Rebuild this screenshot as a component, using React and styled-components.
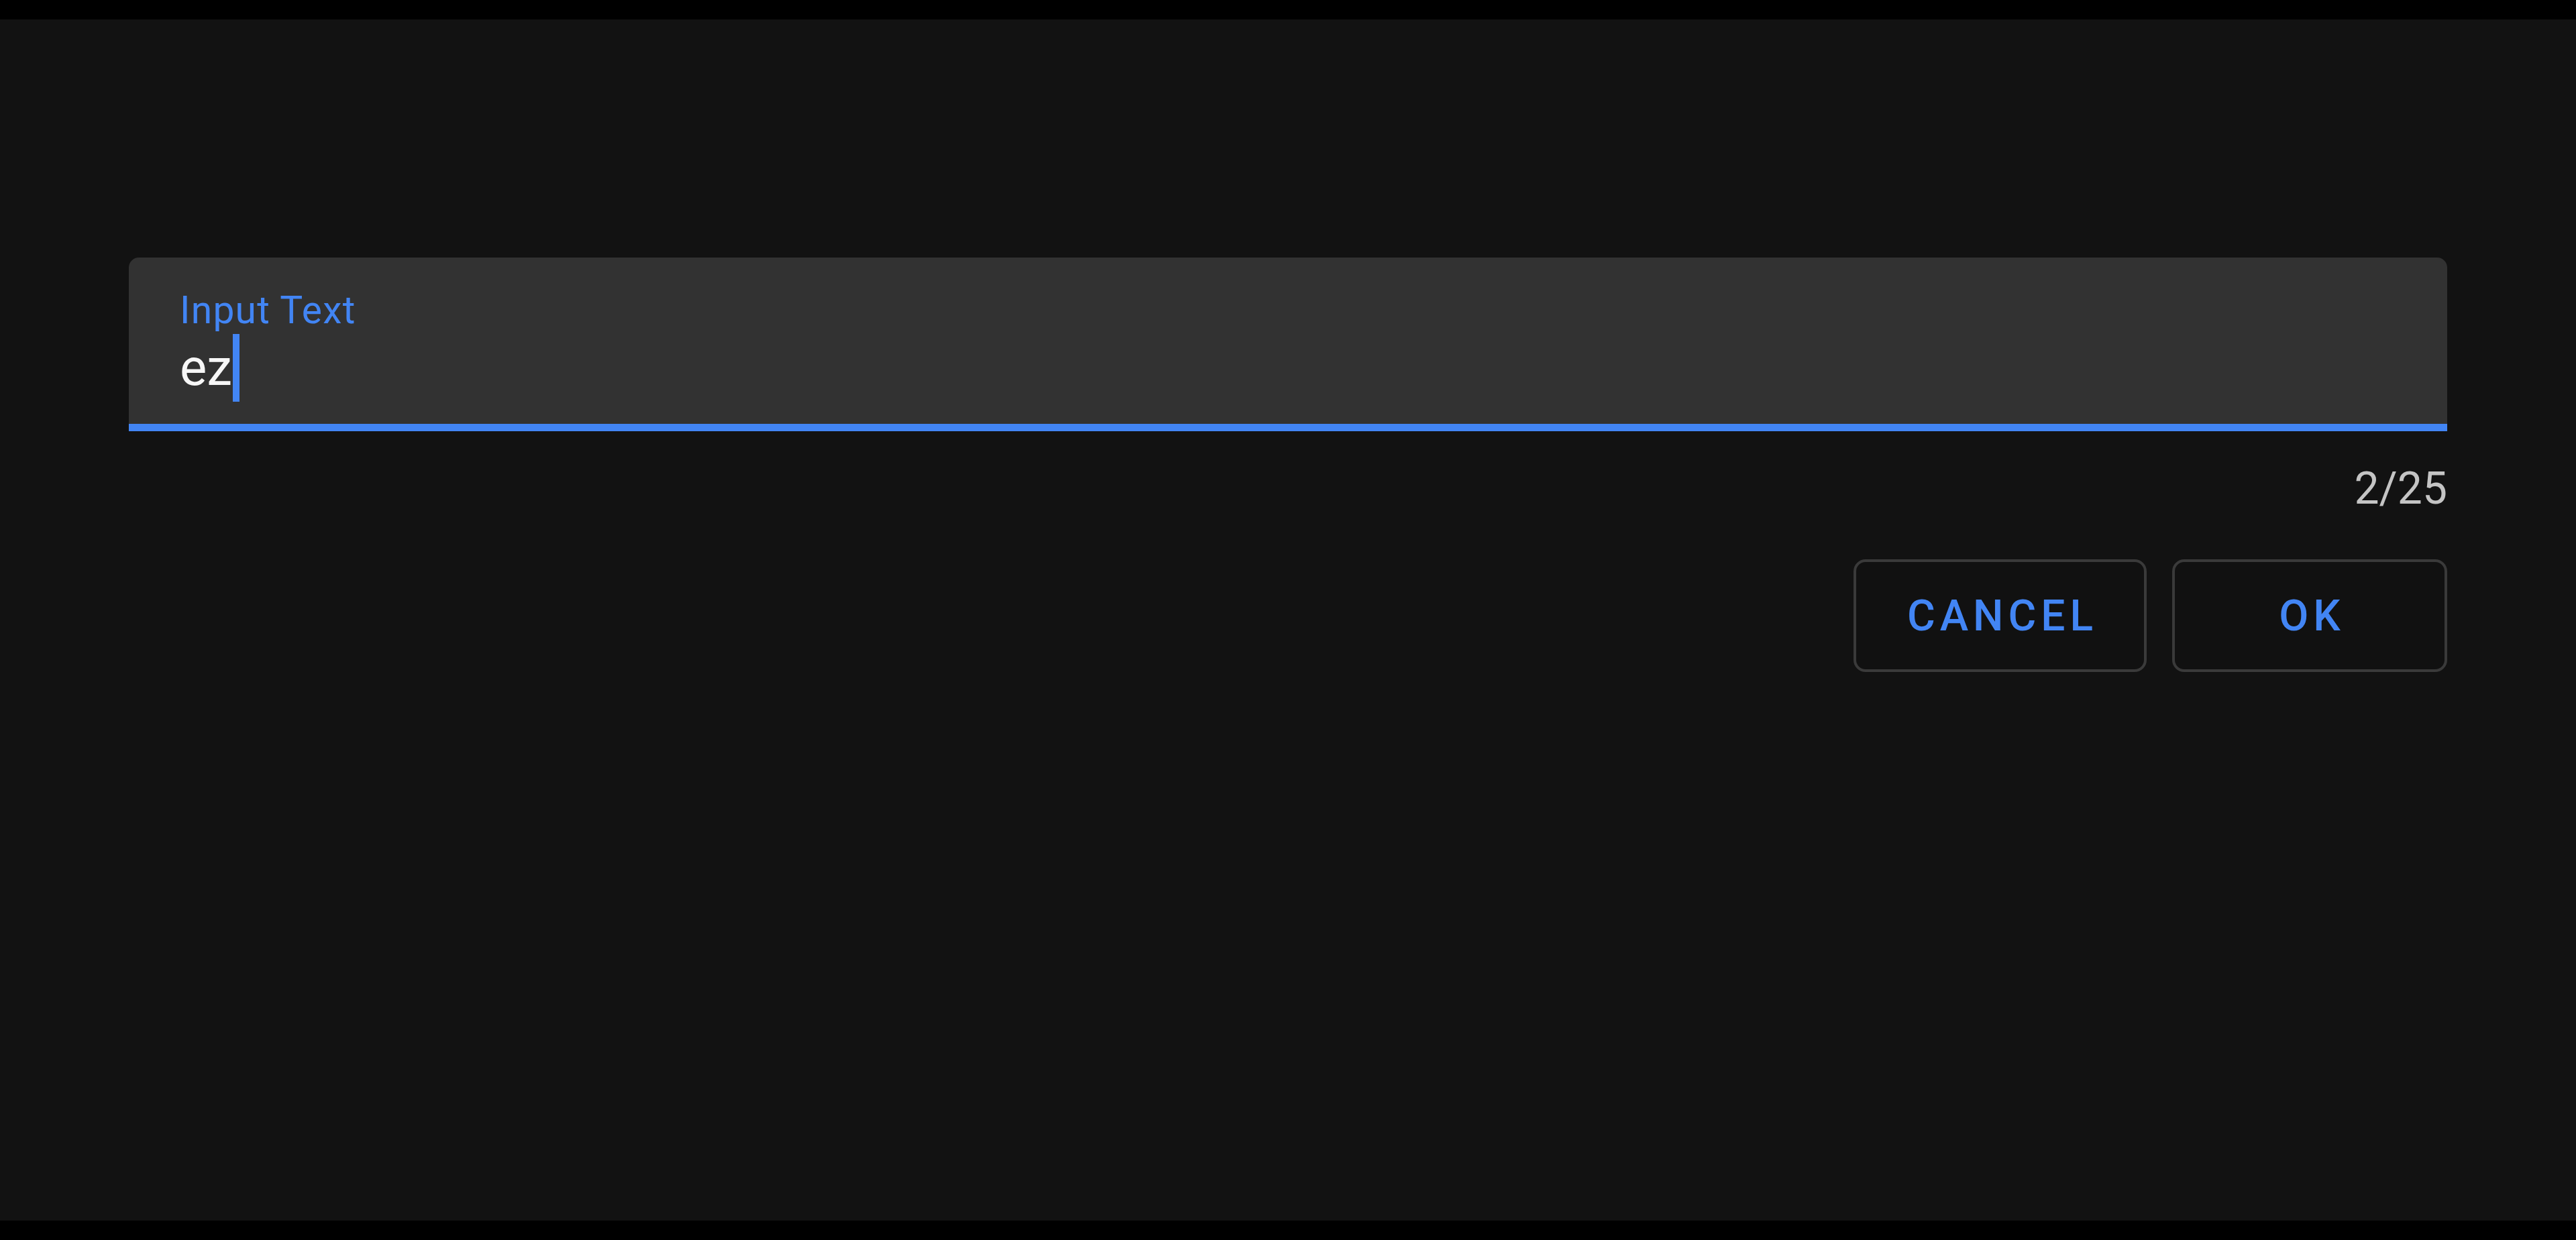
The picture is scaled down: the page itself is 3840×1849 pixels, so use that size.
import React from 'react';
import styled, { createGlobalStyle } from 'styled-components';

const GlobalStyle = createGlobalStyle`
  html, body {
    margin: 0;
    padding: 0;
    background: #000;
  }
  body {
    font-family: Roboto, "Liberation Sans", sans-serif;
  }
`;

const Screen = styled.div`
  height: 1849px;
  padding: 29px 0;
  box-sizing: border-box;
  background: #000;
`;

const Content = styled.div`
  height: 100%;
  background: #121212;
  padding: 355px 192px 0;
  box-sizing: border-box;
  display: flex;
  flex-direction: column;
`;

const Field = styled.div`
  background: #323232;
  border-radius: 15px 15px 0 0;
  border-bottom: 11px solid #4285f4;
  padding: 50px 76px 45px;
  display: flex;
  flex-direction: column;
  gap: 18px;
`;

const Label = styled.div`
  color: #4285f4;
  font-size: 57px;
  line-height: 57px;
  letter-spacing: 1.2px;
`;

const InputRow = styled.div`
  display: flex;
  align-items: center;
  height: 78px;
  color: #f7f7f7;
  font-size: 76px;
  line-height: 78px;
`;

const Caret = styled.span`
  display: inline-block;
  width: 10px;
  height: 101px;
  margin: -12px 0 -12px 1px;
  background: #4285f4;
`;

const Counter = styled.div`
  align-self: flex-end;
  margin-top: 53px;
  color: #c4c4c4;
  font-size: 66px;
  line-height: 66px;
`;

const Actions = styled.div`
  display: flex;
  justify-content: flex-end;
  gap: 38px;
  margin-top: 72px;
`;

const Button = styled.button`
  height: 168px;
  min-width: ${(p) => p.$minWidth || 0}px;
  padding: 0 69px;
  box-sizing: border-box;
  background: #111111;
  border: 4px solid #3a3a3a;
  border-radius: 18px;
  color: #4285f4;
  font-family: Roboto, "Liberation Sans", sans-serif;
  font-weight: 500;
  font-size: 64px;
  letter-spacing: 7px;
  text-indent: 7px;
  cursor: pointer;
`;

export default function App() {
  return (
    <>
      <GlobalStyle />
      <Screen>
        <Content>
          <Field>
            <Label>Input Text</Label>
            <InputRow>
              ez
              <Caret />
            </InputRow>
          </Field>
          <Counter>2/25</Counter>
          <Actions>
            <Button>CANCEL</Button>
            <Button $minWidth={410}>OK</Button>
          </Actions>
        </Content>
      </Screen>
    </>
  );
}
